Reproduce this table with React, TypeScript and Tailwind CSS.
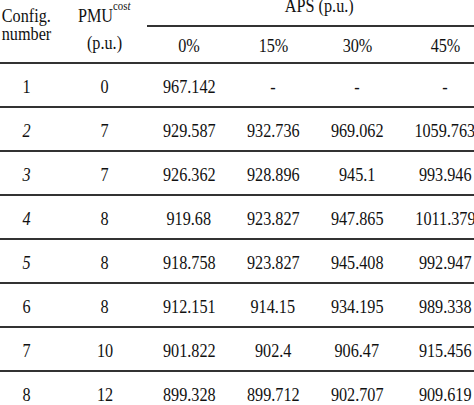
const rows: { n: string; italic: boolean; pmu: string; v: string[] }[] = [
  { n: "1", italic: false, pmu: "0", v: ["967.142", "-", "-", "-"] },
  { n: "2", italic: true, pmu: "7", v: ["929.587", "932.736", "969.062", "1059.763"] },
  { n: "3", italic: true, pmu: "7", v: ["926.362", "928.896", "945.1", "993.946"] },
  { n: "4", italic: true, pmu: "8", v: ["919.68", "923.827", "947.865", "1011.379"] },
  { n: "5", italic: true, pmu: "8", v: ["918.758", "923.827", "945.408", "992.947"] },
  { n: "6", italic: false, pmu: "8", v: ["912.151", "914.15", "934.195", "989.338"] },
  { n: "7", italic: false, pmu: "10", v: ["901.822", "902.4", "906.47", "915.456"] },
  { n: "8", italic: false, pmu: "12", v: ["899.328", "899.712", "902.707", "909.619"] },
];

const cols = "grid grid-cols-[52px_95px_84px_84px_84px_92px] w-[491px]";
// the scan is squeezed sideways, so glyphs are a bit narrow
const txt = "inline-block scale-x-[0.9] whitespace-nowrap";

export default function App() {
  return (
    <div className="w-[474px] h-[405px] overflow-hidden bg-white text-[#111] text-[18px] font-['Liberation_Serif',serif]">
      {/* header */}
      <div className={`${cols} grid-rows-[27px_35px] border-b-2 border-[#333]`}>
        <div className="row-span-2 flex flex-col items-center pt-[7px] leading-[18px]">
          <span className={txt}>Config.</span>
          <span className={txt}>number</span>
        </div>
        <div className="row-span-2 flex flex-col items-center pl-[10px] pt-[7px] leading-[18px]">
          <span className={txt}>
            PMU
            <sup className="text-[12px] -top-3">
              cos<i>t</i>
            </sup>
          </span>
          <span className={`${txt} mt-[9px]`}>(p.u.)</span>
        </div>
        <div className="col-span-4 border-b-2 border-[#333] flex justify-center leading-[12px]">
          <span className={txt}>APS (p.u.)</span>
        </div>
        {["0%", "15%", "30%", "45%"].map((h) => (
          <div key={h} className="flex justify-center pt-[10px] leading-[18px]">
            <span className={txt}>{h}</span>
          </div>
        ))}
      </div>

      {/* body */}
      {rows.map((r) => (
        <div key={r.n} className={`${cols} h-[44px] border-b-2 border-[#333] leading-[18px]`}>
          <div className={`flex justify-center pt-[14px] ${r.italic ? "italic" : ""}`}>
            <span className={txt}>{r.n}</span>
          </div>
          <div className="flex justify-center pt-[14px] pl-[10px]">
            <span className={txt}>{r.pmu}</span>
          </div>
          {r.v.map((v, i) => (
            <div key={i} className="flex justify-center pt-[14px]">
              <span className={txt}>{v}</span>
            </div>
          ))}
        </div>
      ))}
    </div>
  );
}
